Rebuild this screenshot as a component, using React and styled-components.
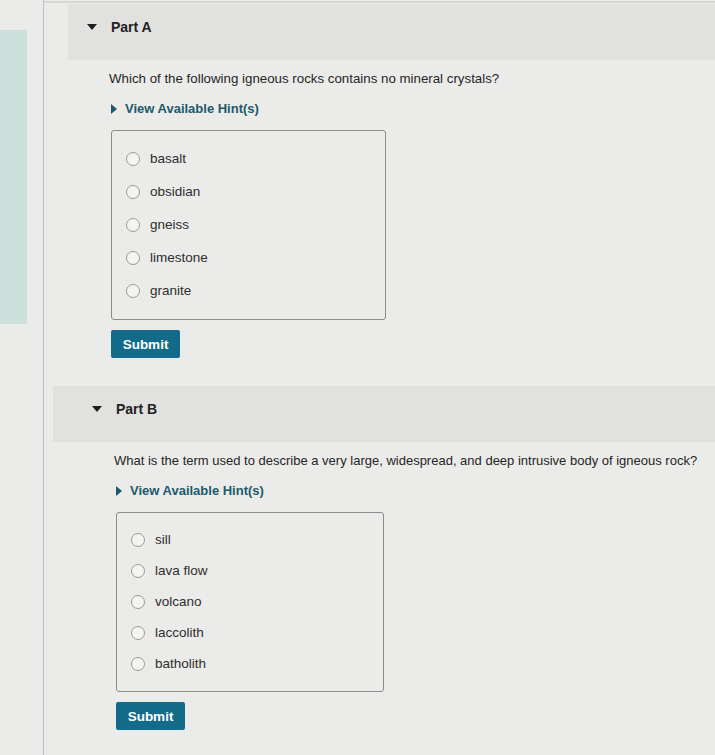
import React from "react";
import styled, { createGlobalStyle } from "styled-components";

const GlobalStyle = createGlobalStyle`
  html, body {
    margin: 0;
    padding: 0;
    background: #ebebe9;
    font-family: "Liberation Sans", Arial, sans-serif;
    color: #2a2a2a;
  }
`;

const parts = [
  {
    title: "Part A",
    question: "Which of the following igneous rocks contains no mineral crystals?",
    options: ["basalt", "obsidian", "gneiss", "limestone", "granite"],
    bandLeft: 24,
    bandTop: 1,
    indent: 43,
    boxWidth: 275,
    rowHeight: 33,
    questionSize: 13.3,
  },
  {
    title: "Part B",
    question:
      "What is the term used to describe a very large, widespread, and deep intrusive body of igneous rock?",
    options: ["sill", "lava flow", "volcano", "laccolith", "batholith"],
    bandLeft: 9,
    bandTop: 28,
    indent: 48,
    boxWidth: 268,
    rowHeight: 31,
    questionSize: 13,
  },
];

const App = () => {
  return (
    <Page>
      <GlobalStyle />
      <Sidebar>
        <TealPanel />
      </Sidebar>
      <Main>
        {parts.map((p) => (
          <Part key={p.title} data={p} />
        ))}
      </Main>
    </Page>
  );
};

const Part = ({ data }) => (
  <Section $top={data.bandTop}>
    <HeaderBand $left={data.bandLeft} $indent={data.indent}>
      <Caret viewBox="0 0 10 6">
        <path d="M0 0 L10 0 L5 6 Z" fill="#1e1e1e" />
      </Caret>
      <Title>{data.title}</Title>
    </HeaderBand>
    <Body $indent={data.indent + 22}>
      <Question $size={data.questionSize}>{data.question}</Question>
      <Hint>
        <HintArrow viewBox="0 0 6 10">
          <path d="M0 0 L6 5 L0 10 Z" fill="#1c5a6c" />
        </HintArrow>
        View Available Hint(s)
      </Hint>
      <Choices $w={data.boxWidth}>
        {data.options.map((o) => (
          <Choice key={o} $h={data.rowHeight}>
            <Radio />
            <span>{o}</span>
          </Choice>
        ))}
      </Choices>
      <SubmitButton>Submit</SubmitButton>
    </Body>
  </Section>
);

const Page = styled.div`
  display: flex;
  min-height: 755px;
  width: 715px;
  overflow: hidden;
`;

const Sidebar = styled.div`
  width: 43px;
  flex-shrink: 0;
  border-right: 1px solid #b7c1c4;
  padding-top: 30px;
`;

const TealPanel = styled.div`
  width: 27px;
  height: 294px;
  background: #cde0dc;
`;

const Main = styled.div`
  flex: 1;
  display: flex;
  flex-direction: column;
  border-top: 2px solid #d6d6d4;
  margin-top: 1px;
`;

const Section = styled.section`
  margin-top: ${(p) => p.$top}px;
`;

const HeaderBand = styled.div`
  margin-left: ${(p) => p.$left}px;
  height: 56px;
  box-sizing: border-box;
  background: #e1e1df;
  display: flex;
  align-items: center;
  align-self: stretch;
  padding: 0 0 10px ${(p) => p.$indent - p.$left}px;
  gap: 14px;
`;

const Caret = styled.svg`
  width: 10px;
  height: 6px;
`;

const Title = styled.h2`
  margin: 0;
  font-size: 14px;
  line-height: 16px;
  font-weight: 700;
  color: #222;
`;

const Body = styled.div`
  padding-left: ${(p) => p.$indent}px;
  padding-top: 11px;
`;

const Question = styled.p`
  margin: 0;
  font-size: ${(p) => p.$size}px;
  line-height: 16px;
  color: #262626;
  white-space: nowrap;
`;

const Hint = styled.div`
  margin-top: 14px;
  display: flex;
  align-items: center;
  gap: 8px;
  font-size: 13px;
  line-height: 16px;
  font-weight: 700;
  color: #1c5a6c;
  margin-left: 2px;
`;

const HintArrow = styled.svg`
  width: 6px;
  height: 10px;
`;

const Choices = styled.div`
  margin-top: 13px;
  width: ${(p) => p.$w}px;
  box-sizing: border-box;
  border: 1px solid #8c8c8c;
  border-radius: 3px;
  padding: 11px 0 12px;
  display: flex;
  flex-direction: column;
  margin-left: 2px;
`;

const Choice = styled.label`
  height: ${(p) => p.$h}px;
  display: flex;
  align-items: center;
  gap: 10px;
  padding-left: 14px;
  font-size: 13.5px;
  color: #2e2e2e;
`;

const Radio = styled.span`
  width: 14px;
  height: 14px;
  border-radius: 50%;
  border: 1px solid #9a9a9a;
  background: #f4f4f2;
  box-sizing: border-box;
`;

const SubmitButton = styled.button`
  margin-top: 10px;
  margin-left: 2px;
  width: 69px;
  height: 28px;
  border: none;
  border-radius: 2px;
  background: #136b8a;
  color: #fff;
  font-family: "Liberation Sans", Arial, sans-serif;
  font-size: 13.5px;
  font-weight: 700;
  padding: 0;
`;

export default App;
